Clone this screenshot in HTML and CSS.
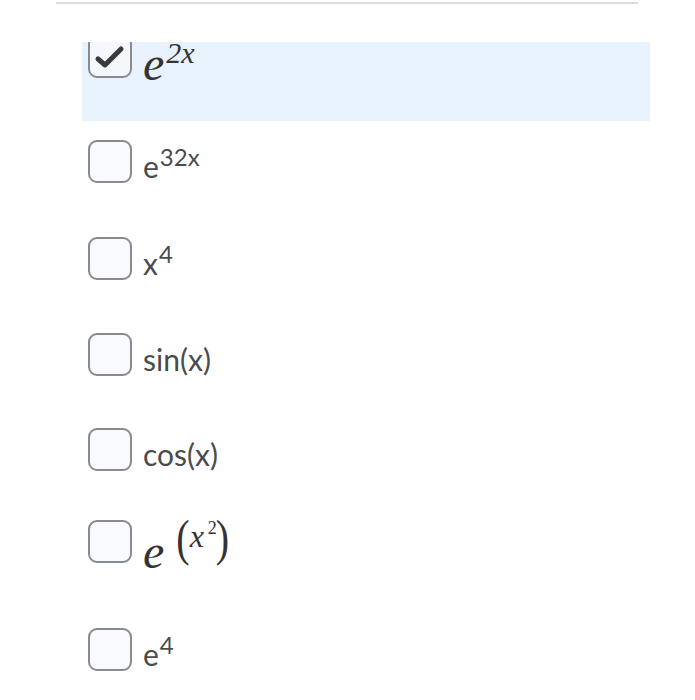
FILE: index.html
```html
<!DOCTYPE html>
<html>
<head>
<meta charset="utf-8">
<link rel="stylesheet" href="styles.css">
</head>
<body>
<div class="rule"></div>
<div class="list">
  <div class="row row1 selected">
    <span class="box">
      <svg width="40" height="39" viewBox="0 0 40 39"><path d="M8 22 L15 28 L31 12" fill="none" stroke="#3a3a3a" stroke-width="5" stroke-linecap="round" stroke-linejoin="round"/></svg>
    </span>
    <span class="math m1"><span class="me">e</span><span class="msup">2x</span></span>
  </div>
  <div class="row row2">
    <span class="box"></span>
    <span class="label">e<sup class="sup">32x</sup></span>
  </div>
  <div class="row row3">
    <span class="box"></span>
    <span class="label">x<sup class="sup">4</sup></span>
  </div>
  <div class="row row4">
    <span class="box"></span>
    <span class="label">sin(x)</span>
  </div>
  <div class="row row5">
    <span class="box"></span>
    <span class="label">cos(x)</span>
  </div>
  <div class="row row6">
    <span class="box"></span>
    <span class="math m6"><span class="me">e</span><span class="mexp"><span class="paren">(</span><span class="mx">x</span><span class="msup2">2</span><span class="paren">)</span></span></span>
  </div>
  <div class="row row7">
    <span class="box"></span>
    <span class="label">e<sup class="sup">4</sup></span>
  </div>
</div>
</body>
</html>
```

FILE: styles.css
```css
html, body {
  margin: 0;
  padding: 0;
  background: #ffffff;
}
body {
  font-family: Lato, "Open Sans", sans-serif;
  color: #494c4e;
}
.rule {
  margin: 2px 0 0 56px;
  width: 582px;
  height: 2px;
  background: #dcdcdc;
}
.list {
  margin: 38px 0 0 82px;
  width: 568px;
  height: 658px;
  overflow: hidden;
}
.row {
  display: flex;
  align-items: flex-start;
  padding-left: 6px;
  box-sizing: border-box;
}
.selected {
  background: #e8f2fc;
}
.row1 { margin-top: -7px; height: 86px; }
.row2 { margin-top: 19px; height: 97px; }
.row3 { height: 96px; }
.row4 { height: 95px; }
.row5 { height: 92px; }
.row6 { height: 108px; }
.row7 { height: 60px; }
.box {
  flex: none;
  width: 44px;
  height: 43px;
  box-sizing: border-box;
  border: 2px solid #878b90;
  border-radius: 9px;
  background: #f8faff;
  display: flex;
}
.selected .box {
  background: #f4f8fd;
}
.label {
  margin-left: 11px;
  font-size: 30px;
  line-height: 43px;
  padding-top: 5px;
  white-space: nowrap;
}
.sup {
  font-size: 24px;
  vertical-align: 0;
  position: relative;
  top: -12px;
  line-height: 0;
  margin-left: 1px;
}
.math {
  margin-left: 11px;
  font-family: "Liberation Serif", "Times New Roman", serif;
  font-style: italic;
  color: #333333;
  white-space: nowrap;
  display: flex;
  align-items: baseline;
}
.m1 {
  font-size: 48px;
  line-height: 43px;
  padding-top: 7px;
}
.msup {
  font-size: 30px;
  position: relative;
  top: -17px;
  margin-left: 2px;
}
.m6 {
  font-size: 48px;
  line-height: 43px;
  padding-top: 10px;
}
.mexp {
  position: relative;
  top: -21px;
  margin-left: 12px;
  font-size: 32px;
  display: flex;
  align-items: baseline;
}
.paren {
  font-style: normal;
  font-size: 40px;
  line-height: 1;
  display: inline-block;
  position: relative;
  top: 5px;
  transform: scaleY(1.25);
}
.mx {
  margin-left: 0;
}
.msup2 {
  font-style: normal;
  font-size: 18px;
  position: relative;
  top: -13px;
  margin-left: 4px;
  margin-right: -1px;
}
```
